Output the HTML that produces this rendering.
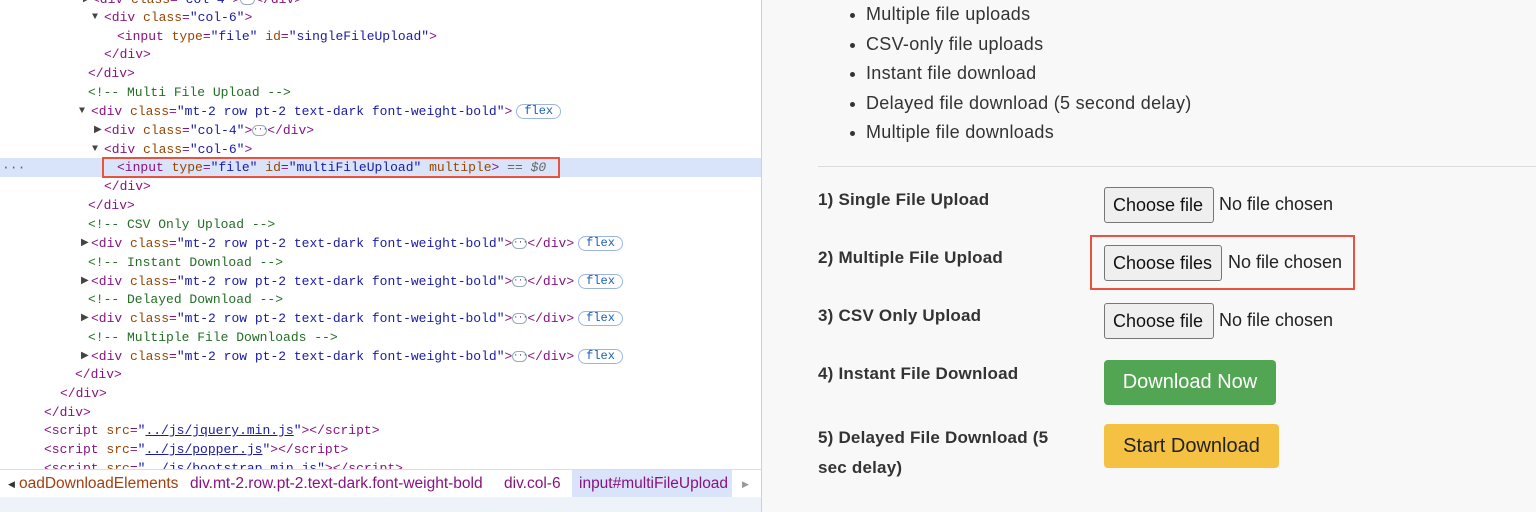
<!DOCTYPE html>
<html><head><meta charset="utf-8"><style>
*{margin:0;padding:0;box-sizing:border-box}
body{width:1536px;height:512px;overflow:hidden;background:#f8f8f8;position:relative;font-family:"Liberation Sans",sans-serif}
#dt{position:absolute;left:0;top:0;width:762px;height:512px;background:#fff;border-right:1px solid #d0d0d0;overflow:hidden}
.l{position:absolute;height:19px;line-height:19px;font-family:"Liberation Mono",monospace;font-size:13px;white-space:pre;color:#881280}
.t{color:#881280}.a{color:#994500}.v{color:#1a1aa6}.c{color:#236e25}.g{color:#666}
.tri{position:absolute;font-size:10px;color:#444}
.dots{display:inline-block;width:15px;height:11px;border:1px solid #9ab;border-radius:6px;font-size:8px;line-height:7px;text-align:center;color:#1a1aa6;vertical-align:middle}
.flex{display:inline-block;border:1px solid #9bb5e0;border-radius:8px;font-size:12px;line-height:13px;padding:0 7px;color:#1a5fb4;margin-left:4px;vertical-align:middle}
u{color:#1a1aa6}
#sel{position:absolute;left:0;top:158px;width:761px;height:19px;background:#d9e4fa}
#box{position:absolute;left:102px;top:157px;width:458px;height:21px;border:2px solid #e8523f}
#crumb{position:absolute;left:0;top:469px;width:761px;height:28px;background:#fff;border-top:1px solid #ddd;font-size:15.5px;line-height:28px;color:#881280}
#tabs{position:absolute;left:0;top:497px;width:761px;height:15px;background:#eef2f9}
#r{position:absolute;left:762px;top:0;right:0;height:512px;color:#333}
ul{position:absolute;left:104px;top:2px;list-style:none;font-size:18px;letter-spacing:.3px;color:#333}
ul li{height:29.6px;line-height:25px;position:relative;padding-left:0}
ul li:before{content:"";position:absolute;left:-16px;top:11px;width:5px;height:5px;border-radius:50%;background:#333}
hr{position:absolute;left:56px;top:166px;width:720px;border:0;border-top:1px solid #ddd}
.lab{position:absolute;left:56px;font-weight:bold;font-size:17px;letter-spacing:.2px;color:#333}
.fb{position:absolute;left:342px;height:36px;border:1px solid #767676;border-radius:3px;background:#efefef;font-size:18px;line-height:34px;padding:0 8px;color:#111;white-space:nowrap}
.nf{position:absolute;font-size:18px;color:#222;white-space:nowrap}
.btn{position:absolute;left:342px;border-radius:4px;font-size:20px;text-align:center}
</style></head><body>
<div id="dt">
<div id="sel"></div>
<div class="l" style="left:92px;top:-10px"><span class="tri" style="left:-9px">▶</span>&lt;div <span class="a">class</span>=<span class="v">"col-4"</span>&gt;<span class="dots">···</span>&lt;/div&gt;</div>
<div class="l" style="left:104px;top:8px"><span class="tri" style="left:-12px">▼</span>&lt;div <span class="a">class</span>=<span class="v">"col-6"</span>&gt;</div>
<div class="l" style="left:117px;top:27px">&lt;input <span class="a">type</span>=<span class="v">"file"</span> <span class="a">id</span>=<span class="v">"singleFileUpload"</span>&gt;</div>
<div class="l" style="left:104px;top:45px">&lt;/div&gt;</div>
<div class="l" style="left:88px;top:64px">&lt;/div&gt;</div>
<div class="l c" style="left:88px;top:83px">&lt;!-- Multi File Upload --&gt;</div>
<div class="l" style="left:91px;top:102px"><span class="tri" style="left:-12px">▼</span>&lt;div <span class="a">class</span>=<span class="v">"mt-2 row pt-2 text-dark font-weight-bold"</span>&gt;<span class="flex">flex</span></div>
<div class="l" style="left:104px;top:121px"><span class="tri" style="left:-10px">▶</span>&lt;div <span class="a">class</span>=<span class="v">"col-4"</span>&gt;<span class="dots">···</span>&lt;/div&gt;</div>
<div class="l" style="left:104px;top:140px"><span class="tri" style="left:-12px">▼</span>&lt;div <span class="a">class</span>=<span class="v">"col-6"</span>&gt;</div>
<div class="l g" style="left:2px;top:158px">···</div>
<div class="l" style="left:117px;top:158px">&lt;input <span class="a">type</span>=<span class="v">"file"</span> <span class="a">id</span>=<span class="v">"multiFileUpload"</span> <span class="a">multiple</span>&gt; <span class="g">== <i>$0</i></span></div>
<div id="box"></div>
<div class="l" style="left:104px;top:177px">&lt;/div&gt;</div>
<div class="l" style="left:88px;top:196px">&lt;/div&gt;</div>
<div class="l c" style="left:88px;top:215px">&lt;!-- CSV Only Upload --&gt;</div>
<div class="l" style="left:91px;top:234px"><span class="tri" style="left:-10px">▶</span>&lt;div <span class="a">class</span>=<span class="v">"mt-2 row pt-2 text-dark font-weight-bold"</span>&gt;<span class="dots">···</span>&lt;/div&gt;<span class="flex">flex</span></div>
<div class="l c" style="left:88px;top:253px">&lt;!-- Instant Download --&gt;</div>
<div class="l" style="left:91px;top:272px"><span class="tri" style="left:-10px">▶</span>&lt;div <span class="a">class</span>=<span class="v">"mt-2 row pt-2 text-dark font-weight-bold"</span>&gt;<span class="dots">···</span>&lt;/div&gt;<span class="flex">flex</span></div>
<div class="l c" style="left:88px;top:290px">&lt;!-- Delayed Download --&gt;</div>
<div class="l" style="left:91px;top:309px"><span class="tri" style="left:-10px">▶</span>&lt;div <span class="a">class</span>=<span class="v">"mt-2 row pt-2 text-dark font-weight-bold"</span>&gt;<span class="dots">···</span>&lt;/div&gt;<span class="flex">flex</span></div>
<div class="l c" style="left:88px;top:328px">&lt;!-- Multiple File Downloads --&gt;</div>
<div class="l" style="left:91px;top:347px"><span class="tri" style="left:-10px">▶</span>&lt;div <span class="a">class</span>=<span class="v">"mt-2 row pt-2 text-dark font-weight-bold"</span>&gt;<span class="dots">···</span>&lt;/div&gt;<span class="flex">flex</span></div>
<div class="l" style="left:75px;top:365px">&lt;/div&gt;</div>
<div class="l" style="left:60px;top:384px">&lt;/div&gt;</div>
<div class="l" style="left:44px;top:403px">&lt;/div&gt;</div>
<div class="l" style="left:44px;top:421px">&lt;script <span class="a">src</span>=<span class="v">"<u>../js/jquery.min.js</u>"</span>&gt;&lt;/script&gt;</div>
<div class="l" style="left:44px;top:440px">&lt;script <span class="a">src</span>=<span class="v">"<u>../js/popper.js</u>"</span>&gt;&lt;/script&gt;</div>
<div class="l" style="left:44px;top:459px">&lt;script <span class="a">src</span>=<span class="v">"<u>../js/bootstrap.min.js</u>"</span>&gt;&lt;/script&gt;</div>
<div id="crumb"><span style="position:absolute;left:8px;font-size:9px;color:#333">◀</span><span style="position:absolute;left:19px;color:#a04010">oadDownloadElements</span><span style="position:absolute;left:190px">div.mt-2.row.pt-2.text-dark.font-weight-bold</span><span style="position:absolute;left:504px">div.col-6</span><span style="position:absolute;left:572px;width:160px;height:27px;background:#d9e4fa;padding-left:7px">input#multiFileUpload</span><span style="position:absolute;left:742px;font-size:9px;color:#999">▶</span></div>
<div id="tabs"></div>
</div>
<div id="r">
<ul><li>Multiple file uploads</li><li>CSV-only file uploads</li><li>Instant file download</li><li>Delayed file download (5 second delay)</li><li>Multiple file downloads</li></ul>
<hr>
<div class="lab" style="top:190px">1) Single File Upload</div>
<div class="fb" style="top:187px;width:110px">Choose file</div><div class="nf" style="left:457px;top:194px">No file chosen</div>
<div class="lab" style="top:248px">2) Multiple File Upload</div>
<div class="fb" style="top:245px;width:118px">Choose files</div><div class="nf" style="left:466px;top:252px">No file chosen</div>
<div style="position:absolute;left:328px;top:235px;width:265px;height:55px;border:2px solid #e8523f"></div>
<div class="lab" style="top:306px">3) CSV Only Upload</div>
<div class="fb" style="top:303px;width:110px">Choose file</div><div class="nf" style="left:457px;top:310px">No file chosen</div>
<div class="lab" style="top:364px">4) Instant File Download</div>
<div class="btn" style="top:360px;width:172px;height:45px;line-height:45px;background:#52a552;color:#fff">Download Now</div>
<div class="lab" style="top:423px;line-height:30px;width:260px">5) Delayed File Download (5<br>sec delay)</div>
<div class="btn" style="top:424px;width:175px;height:44px;line-height:44px;background:#f5c142;color:#222">Start Download</div>
</div>
</body></html>
